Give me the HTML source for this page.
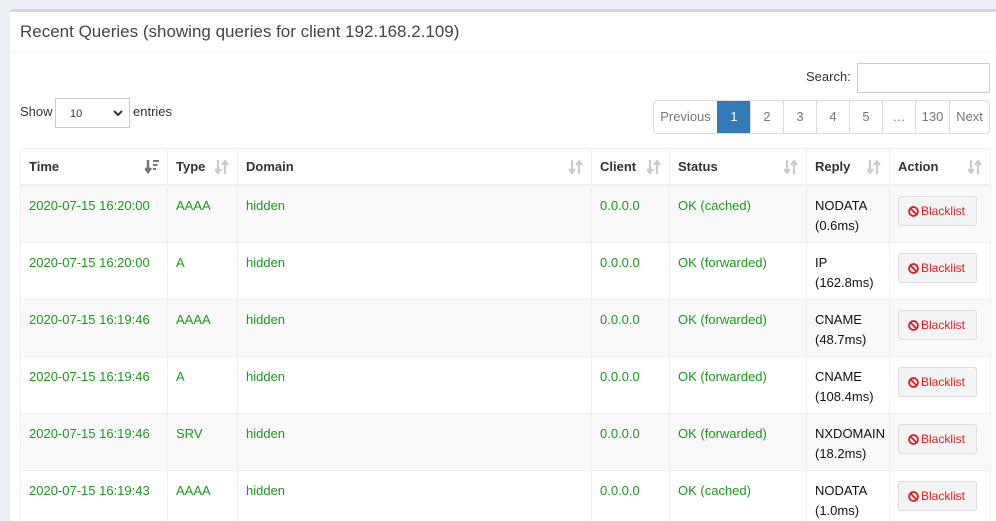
<!DOCTYPE html>
<html><head><meta charset="utf-8"><style>
*{box-sizing:border-box;margin:0;padding:0}
html,body{width:996px;height:521px;overflow:hidden}
body{background:#ecf0f5;font-family:"Liberation Sans",sans-serif;font-size:13px;color:#333;position:relative}
.box{position:absolute;left:10px;top:9px;width:990px;height:520px;background:#fff;border-top:3px solid #d2d6de;border-radius:3px 0 0 0}
.hdr{position:absolute;left:0;top:0;width:100%;height:41px;border-bottom:1px solid #f4f4f4}
.hdr span{position:absolute;left:10px;top:10px;font-size:17px;color:#444}
.abs{position:absolute}
.search{left:806px;top:69px;font-size:13px}
.sinput{left:857px;top:63px;width:133px;height:30px;border:1px solid #ccc}
.show{left:20px;top:104px}
.sel{left:55px;top:98px;width:75px;height:30px;border:1px solid #ccc;font-size:11px;padding:9px 0 0 14px}
.sel svg{position:absolute;right:6px;top:11px}
.ent{left:133px;top:104px}
.pag{left:653px;top:100px;height:34px;display:flex;border:1px solid #ddd;border-radius:4px;overflow:hidden}
.pag div{height:32px;line-height:32px;text-align:center;color:#777;border-left:1px solid #ddd;font-size:13px;width:33px}
.pag div:first-child{border-left:none}
.pag .act{background:#337ab7;color:#fff;border-color:#337ab7}
table{position:absolute;left:20px;top:148px;border-collapse:collapse;width:970px;table-layout:fixed}
td,th{border:1px solid #f0f0f0;text-align:left;vertical-align:top;line-height:20px;overflow:hidden;white-space:nowrap}
th{height:36px;padding:8px 8px 6px;font-weight:bold;color:#333;font-size:13px;position:relative;border-bottom:2px solid #f0f0f0}
td{height:55px;padding:10px 8px 6px;color:#1a9a1a}
tbody tr:nth-child(odd) td{background:#f9f9f9}
td.r{color:#111}
.ar{position:absolute;right:8px;top:11px}
.btn{display:inline-block;width:79px;height:30px;border:1px solid #ddd;border-radius:3px;background:#f4f4f4;color:#e02020;font-size:12px;line-height:28px;padding-left:9px}
.btn svg{vertical-align:-2px;margin-right:2px}
</style></head><body>
<div class="box"><div class="hdr"><span>Recent Queries (showing queries for client 192.168.2.109)</span></div></div>
<div class="abs search">Search:</div>
<div class="abs sinput"></div>
<div class="abs show">Show</div>
<div class="abs sel">10<svg width="10" height="7" viewBox="0 0 10 7"><path d="M1 1l4 4 4-4" stroke="#333" stroke-width="2" fill="none"/></svg></div>
<div class="abs ent">entries</div>
<div class="abs pag"><div style="width:63px">Previous</div><div class="act">1</div><div>2</div><div>3</div><div>4</div><div>5</div><div>…</div><div style="width:34px">130</div><div style="width:40px">Next</div></div>
<table>
<colgroup><col style="width:147px"><col style="width:70px"><col style="width:354px"><col style="width:78px"><col style="width:137px"><col style="width:83px"><col style="width:101px"></colgroup>
<thead><tr>
<th>Time<svg class="ar" width="14" height="14" viewBox="0 0 14 14"><path d="M3 0v10M0 8l3 4 3-4" stroke="#777" stroke-width="2.5" fill="none"/><path d="M8 1h6M8 5h4.5M8 9h3" stroke="#777" stroke-width="2"/></svg></th>
<th>Type<svg class="ar" width="14" height="14" viewBox="0 0 14 14"><path d="M3 0v12M0 9l3 4 3-4M10 14V2M7 5l3-4 3 4" stroke="#ccc" stroke-width="2.2" fill="none"/></svg></th>
<th>Domain<svg class="ar" width="14" height="14" viewBox="0 0 14 14"><path d="M3 0v12M0 9l3 4 3-4M10 14V2M7 5l3-4 3 4" stroke="#ccc" stroke-width="2.2" fill="none"/></svg></th>
<th>Client<svg class="ar" width="14" height="14" viewBox="0 0 14 14"><path d="M3 0v12M0 9l3 4 3-4M10 14V2M7 5l3-4 3 4" stroke="#ccc" stroke-width="2.2" fill="none"/></svg></th>
<th>Status<svg class="ar" width="14" height="14" viewBox="0 0 14 14"><path d="M3 0v12M0 9l3 4 3-4M10 14V2M7 5l3-4 3 4" stroke="#ccc" stroke-width="2.2" fill="none"/></svg></th>
<th>Reply<svg class="ar" width="14" height="14" viewBox="0 0 14 14"><path d="M3 0v12M0 9l3 4 3-4M10 14V2M7 5l3-4 3 4" stroke="#ccc" stroke-width="2.2" fill="none"/></svg></th>
<th>Action<svg class="ar" width="14" height="14" viewBox="0 0 14 14"><path d="M3 0v12M0 9l3 4 3-4M10 14V2M7 5l3-4 3 4" stroke="#ccc" stroke-width="2.2" fill="none"/></svg></th>
</tr></thead>
<tbody>
<tr><td>2020-07-15 16:20:00</td><td>AAAA</td><td>hidden</td><td>0.0.0.0</td><td>OK (cached)</td><td class="r">NODATA<br>(0.6ms)</td><td><span class="btn"><svg width="11" height="11" viewBox="0 0 12 12"><circle cx="6" cy="6" r="4.8" stroke="#e02020" stroke-width="2" fill="none"/><path d="M2.6 2.6l6.8 6.8" stroke="#e02020" stroke-width="2"/></svg>Blacklist</span></td></tr>
<tr><td>2020-07-15 16:20:00</td><td>A</td><td>hidden</td><td>0.0.0.0</td><td>OK (forwarded)</td><td class="r">IP<br>(162.8ms)</td><td><span class="btn"><svg width="11" height="11" viewBox="0 0 12 12"><circle cx="6" cy="6" r="4.8" stroke="#e02020" stroke-width="2" fill="none"/><path d="M2.6 2.6l6.8 6.8" stroke="#e02020" stroke-width="2"/></svg>Blacklist</span></td></tr>
<tr><td>2020-07-15 16:19:46</td><td>AAAA</td><td>hidden</td><td>0.0.0.0</td><td>OK (forwarded)</td><td class="r">CNAME<br>(48.7ms)</td><td><span class="btn"><svg width="11" height="11" viewBox="0 0 12 12"><circle cx="6" cy="6" r="4.8" stroke="#e02020" stroke-width="2" fill="none"/><path d="M2.6 2.6l6.8 6.8" stroke="#e02020" stroke-width="2"/></svg>Blacklist</span></td></tr>
<tr><td>2020-07-15 16:19:46</td><td>A</td><td>hidden</td><td>0.0.0.0</td><td>OK (forwarded)</td><td class="r">CNAME<br>(108.4ms)</td><td><span class="btn"><svg width="11" height="11" viewBox="0 0 12 12"><circle cx="6" cy="6" r="4.8" stroke="#e02020" stroke-width="2" fill="none"/><path d="M2.6 2.6l6.8 6.8" stroke="#e02020" stroke-width="2"/></svg>Blacklist</span></td></tr>
<tr><td>2020-07-15 16:19:46</td><td>SRV</td><td>hidden</td><td>0.0.0.0</td><td>OK (forwarded)</td><td class="r">NXDOMAIN<br>(18.2ms)</td><td><span class="btn"><svg width="11" height="11" viewBox="0 0 12 12"><circle cx="6" cy="6" r="4.8" stroke="#e02020" stroke-width="2" fill="none"/><path d="M2.6 2.6l6.8 6.8" stroke="#e02020" stroke-width="2"/></svg>Blacklist</span></td></tr>
<tr><td>2020-07-15 16:19:43</td><td>AAAA</td><td>hidden</td><td>0.0.0.0</td><td>OK (cached)</td><td class="r">NODATA<br>(1.0ms)</td><td><span class="btn"><svg width="11" height="11" viewBox="0 0 12 12"><circle cx="6" cy="6" r="4.8" stroke="#e02020" stroke-width="2" fill="none"/><path d="M2.6 2.6l6.8 6.8" stroke="#e02020" stroke-width="2"/></svg>Blacklist</span></td></tr>
</tbody></table>
</body></html>
